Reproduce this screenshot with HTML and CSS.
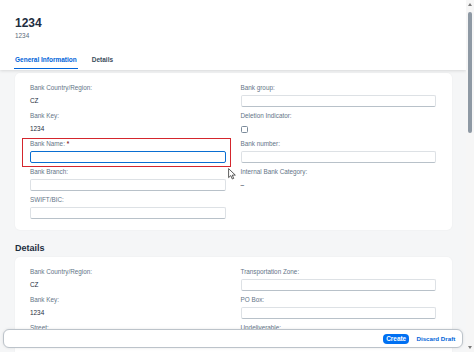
FILE: index.html
```html
<!DOCTYPE html>
<html lang="en">
<head>
<meta charset="utf-8">
<title>1234</title>
<link rel="stylesheet" href="styles.css">
</head>
<body>
<div class="screen">
  <div class="main">
    <header class="head">
      <h1 class="title">1234</h1>
      <div class="subtitle">1234</div>
      <nav class="tabs">
        <span class="tab active">General Information</span>
        <span class="tab">Details</span>
      </nav>
    </header>
    <div class="content">
      <section class="card">
        <div class="col">
          <div class="field"><div class="label">Bank Country/Region:</div><div class="value">CZ</div></div>
          <div class="field"><div class="label">Bank Key:</div><div class="value">1234</div></div>
          <div class="field">
            <div class="label">Bank Name: <span class="req">*</span></div>
            <div class="input focus"></div>
            <div class="highlight"></div>
          </div>
          <div class="field"><div class="label">Bank Branch:</div><div class="input"></div></div>
          <div class="field"><div class="label">SWIFT/BIC:</div><div class="input"></div></div>
        </div>
        <div class="col">
          <div class="field"><div class="label">Bank group:</div><div class="input"></div></div>
          <div class="field"><div class="label">Deletion Indicator:</div><div class="check"><span class="box"></span></div></div>
          <div class="field"><div class="label">Bank number:</div><div class="input"></div></div>
          <div class="field"><div class="label">Internal Bank Category:</div><div class="value">–</div></div>
        </div>
      </section>
      <h2 class="section-title">Details</h2>
      <section class="card">
        <div class="col">
          <div class="field"><div class="label">Bank Country/Region:</div><div class="value">CZ</div></div>
          <div class="field"><div class="label">Bank Key:</div><div class="value">1234</div></div>
          <div class="field"><div class="label">Street:</div><div class="input"></div></div>
        </div>
        <div class="col">
          <div class="field"><div class="label">Transportation Zone:</div><div class="input"></div></div>
          <div class="field"><div class="label">PO Box:</div><div class="input"></div></div>
          <div class="field"><div class="label">Undeliverable:</div><div class="check"><span class="box"></span></div></div>
        </div>
      </section>
    </div>
    <div class="footer">
      <span class="btn-primary">Create</span>
      <span class="btn-link">Discard Draft</span>
    </div>
    <svg class="cursor" width="9" height="12" viewBox="0 0 9 12">
      <path d="M0.6 0.6 L0.6 9.6 L2.8 7.6 L4.3 11 L5.7 10.4 L4.3 7.1 L7.3 7.1 Z" fill="#fff" stroke="#333" stroke-width="0.8" stroke-linejoin="round"/>
    </svg>
  </div>
  <div class="scrollbar">
    <span class="arrow-up"></span>
    <span class="thumb"></span>
    <span class="spacer"></span>
    <span class="arrow-down"></span>
  </div>
</div>
</body>
</html>
```
FILE: styles.css
```css
* { box-sizing: border-box; margin: 0; padding: 0; }
html, body { width: 474px; height: 352px; overflow: hidden; }
body {
  font-family: "Liberation Sans", Arial, sans-serif;
  color: #1d2d3e;
  background: #f5f6f7;
}
.screen { display: flex; width: 474px; height: 352px; }
.main {
  position: relative;
  width: 466px;
  height: 352px;
  overflow: hidden;
  background: #f5f6f7;
}
.head {
  position: relative;
  z-index: 1;
  background: #fff;
  height: 69.5px;
  padding: 15.5px 15px 0;
  box-shadow: 0 1px 3px rgba(0, 0, 0, 0.12);
}
.title { font-size: 12px; line-height: 14px; font-weight: 700; color: #1d2d3e; }
.subtitle { font-size: 6.4px; line-height: 8px; margin-top: 2px; color: #5b6b7b; }
.tabs { display: flex; gap: 13px; margin-top: 16.3px; margin-left: -1px; }
.tab {
  font-size: 6.5px;
  line-height: 8px;
  font-weight: 700;
  padding: 0 1px 4.2px;
  border-bottom: 1.5px solid transparent;
  color: #3a4b5c;
}
.tab.active { color: #0064d9; border-bottom-color: #0064d9; }

.content { padding: 3.5px 14.3px 0 15px; }
.card {
  background: #fff;
  border-radius: 5px;
  padding: 11px 15.7px 11px 15px;
  display: grid;
  grid-template-columns: 1fr 1fr;
  column-gap: 15px;
  align-items: start;
  box-shadow: 0 0 2px rgba(0, 0, 0, 0.06);
}
.col { display: flex; flex-direction: column; gap: 5px; }
.field { position: relative; display: flex; flex-direction: column; gap: 3px; }
.label { font-size: 6.35px; line-height: 8px; height: 8px; color: #647587; white-space: nowrap; }
.req { color: #8c1f1f; font-weight: 700; }
.value { font-size: 6.4px; line-height: 12px; height: 12px; color: #1d2d3e; }
.input {
  height: 12px;
  background: #fff;
  border: 1px solid #dde1e5;
  border-bottom-color: #b8c1c9;
  border-radius: 2px;
}
.input.focus { border: 1px solid #0a6ed1; border-radius: 2px; }
.check { height: 12px; display: flex; align-items: center; }
.box {
  width: 7px;
  height: 7px;
  border: 1px solid #7b8b9b;
  border-radius: 1.5px;
  background: #fff;
}
.highlight {
  position: absolute;
  left: -8px;
  top: -1.7px;
  right: -5.7px;
  bottom: -3.7px;
  border: 1.3px solid #d4262d;
}
.section-title { font-size: 9px; line-height: 12px; font-weight: 700; margin: 11.5px 0 3.2px; color: #1d2d3e; }

.footer {
  position: absolute;
  left: 3.3px;
  top: 329px;
  width: 460px;
  height: 19.3px;
  background: #fff;
  border: 1px solid #bcc3ca;
  border-radius: 6px;
  display: flex;
  align-items: center;
  justify-content: flex-end;
  gap: 7.3px;
  padding-right: 7px;
  box-shadow: 0 0 3px rgba(0, 0, 0, 0.1);
  z-index: 2;
}
.btn-primary {
  background: #0070f2;
  color: #fff;
  font-size: 6.4px;
  font-weight: 700;
  height: 10.3px;
  line-height: 10.3px;
  padding: 0 3px;
  border-radius: 4px;
}
.btn-link { color: #0064d9; font-size: 6.2px; font-weight: 700; }
.cursor { position: absolute; left: 228px; top: 167.5px; z-index: 3; }

.scrollbar {
  width: 8px;
  height: 352px;
  background: #f6f6f6;
  display: flex;
  flex-direction: column;
  align-items: center;
  padding: 3px 0 3px;
}
.arrow-up {
  width: 0; height: 0;
  border-left: 2px solid transparent;
  border-right: 2px solid transparent;
  border-bottom: 3px solid #7a7a7a;
}
.arrow-down {
  width: 0; height: 0;
  border-left: 2px solid transparent;
  border-right: 2px solid transparent;
  border-top: 3px solid #7a7a7a;
}
.thumb {
  width: 4px;
  height: 121px;
  margin-top: 6px;
  background: #8e99a4;
  border-radius: 2px;
}
.spacer { flex: 1; }
```
